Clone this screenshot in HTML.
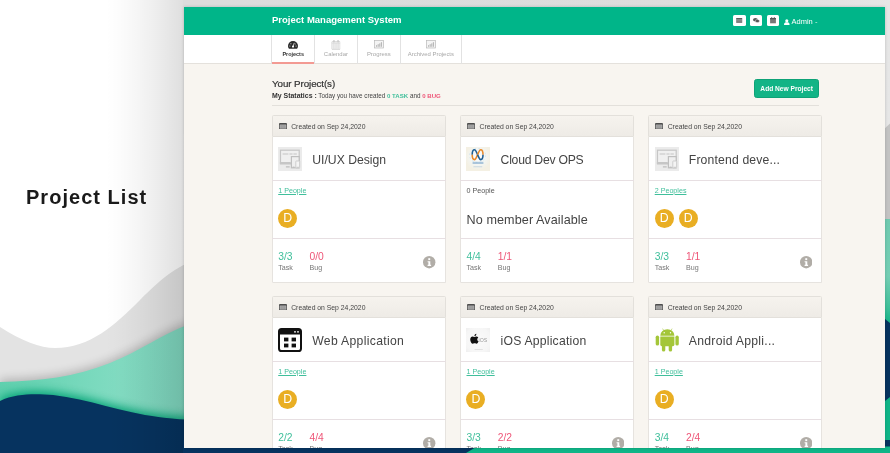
<!DOCTYPE html>
<html>
<head>
<meta charset="utf-8">
<title>Project List</title>
<style>
*{box-sizing:border-box;margin:0;padding:0}
html,body{width:890px;height:453px;overflow:hidden;background:#fff}
body{font-family:"Liberation Sans",sans-serif;position:relative;color:#444}
#title,#frame{will-change:transform}
.abs{position:absolute}
#bg{position:absolute;left:0;top:0;width:890px;height:453px}
#title{position:absolute;left:26.3px;top:184.7px;font-size:20px;font-weight:bold;color:#1a1a1a;white-space:nowrap;line-height:24px;letter-spacing:1.03px}
#frame{position:absolute;left:184px;top:7px;width:701.2px;height:440.8px;background:#f8f5f0;overflow:hidden;box-shadow:0 0 3px rgba(0,0,0,.18)}
#hdr{position:absolute;left:0;top:0;width:100%;height:28px;background:#00b589}
#hdr .ttl{position:absolute;left:88px;top:7.2px;font-size:9.52px;font-weight:bold;color:#fff;white-space:nowrap;line-height:12px}
.hb svg{display:block}
.hb{position:absolute;top:8.3px;width:12.4px;height:10.8px;background:#fff;border-radius:1.6px}
#nav{position:absolute;left:0;top:28px;width:100%;height:28.6px;background:#fff;border-bottom:0.7px solid #e4e1dc}
.tab{position:absolute;top:0;height:28.6px;border-left:0.6px solid #e2e2e2;text-align:center}
.tab .lb{position:absolute;left:0;right:0;top:16.3px;font-size:5.95px;line-height:7px;color:#a8a8a8;white-space:nowrap}
.tab.act .lb{color:#333;font-weight:bold;font-size:5.48px}
.tab svg{position:absolute;left:50%;top:5.2px;transform:translateX(-50%)}
.card{position:absolute;width:174px;height:168px}
.ch{position:absolute;left:0;top:0;width:100%;height:21.7px;background:linear-gradient(#f6f3ee,#eeebe6);border:0.7px solid #e3e0db;border-radius:1.5px 1.5px 0 0}
.ch span{position:absolute;left:18.3px;top:6.6px;font-size:6.82px;line-height:8px;color:#444;white-space:nowrap}
.ch svg{position:absolute;left:5.9px;top:6.3px}
.cb{position:absolute;left:0;top:21.7px;width:100%;height:146.3px;background:#fff;border:0.7px solid #e6e3df;border-top:none;border-radius:0 0 1.5px 1.5px}
.ln{position:absolute;left:0;width:100%;height:0.7px;background:#e7dfe2}
.ico{position:absolute;left:6.3px;top:31.6px;width:24px;height:24px}
.nm{position:absolute;left:40.4px;top:36.9px;font-size:12.2px;line-height:16px;color:#444;white-space:nowrap}
.pp{position:absolute;left:6.3px;top:71.5px;font-size:7.15px;line-height:8px;color:#3fbf9b;text-decoration:underline;white-space:nowrap}
.pp.no{color:#555;text-decoration:none}
.av{position:absolute;top:93.6px;width:19px;height:19px;border-radius:50%;background:#e9ae23;color:#fff;font-size:12.3px;line-height:19.4px;text-align:center}
.nomem{position:absolute;left:6.3px;top:97.5px;font-size:12.6px;letter-spacing:.1px;line-height:15px;color:#444;white-space:nowrap}
.s1{position:absolute;top:135.4px;font-size:10.3px;line-height:11px;white-space:nowrap}
.s2{position:absolute;top:148.5px;font-size:7.15px;line-height:8px;color:#777;white-space:nowrap}
.g{color:#3fbf9b}.r{color:#ee5577}
.inf{position:absolute;left:151.5px;top:141.1px;width:12.4px;height:12.4px}
</style>
</head>
<body>
<svg id="bg" viewBox="0 0 890 453">
  <defs>
    <linearGradient id="gbg" x1="0" y1="0" x2="890" y2="0" gradientUnits="userSpaceOnUse">
      <stop offset="0" stop-color="#ffffff"/>
      <stop offset="0.118" stop-color="#ffffff"/>
      <stop offset="0.207" stop-color="#dcdcdc"/>
      <stop offset="1" stop-color="#dcdcdc"/>
    </linearGradient>
    <linearGradient id="gsh" x1="0" y1="0" x2="890" y2="0" gradientUnits="userSpaceOnUse"><stop offset="0.0000" stop-color="#000" stop-opacity="0"/><stop offset="0.1180" stop-color="#000" stop-opacity="0.0"/><stop offset="0.1292" stop-color="#000" stop-opacity="0.0072"/><stop offset="0.1404" stop-color="#000" stop-opacity="0.019"/><stop offset="0.1573" stop-color="#000" stop-opacity="0.0416"/><stop offset="0.1708" stop-color="#000" stop-opacity="0.0628"/><stop offset="0.1820" stop-color="#000" stop-opacity="0.0823"/><stop offset="0.1910" stop-color="#000" stop-opacity="0.0989"/><stop offset="0.1989" stop-color="#000" stop-opacity="0.1142"/><stop offset="0.2067" stop-color="#000" stop-opacity="0.13"/><stop offset="1.0000" stop-color="#000" stop-opacity="0.13"/></linearGradient>
    <linearGradient id="gteal" x1="0" y1="0" x2="200" y2="0" gradientUnits="userSpaceOnUse">
      <stop offset="0" stop-color="#5fd0ae"/>
      <stop offset="0.6" stop-color="#82dcc2"/>
      <stop offset="1" stop-color="#7fd6bf"/>
    </linearGradient>
    <linearGradient id="gstrip" x1="0" y1="219" x2="0" y2="323" gradientUnits="userSpaceOnUse"><stop offset="0" stop-color="#6fcab0"/><stop offset=".55" stop-color="#74ceb4"/><stop offset=".85" stop-color="#3fc09a"/><stop offset="1" stop-color="#14b588"/></linearGradient>
    <linearGradient id="gtop" x1="183" y1="0" x2="890" y2="0" gradientUnits="userSpaceOnUse"><stop offset="0" stop-color="#dcdcdc"/><stop offset=".8" stop-color="#dddddd"/><stop offset="1" stop-color="#e6e6e6"/></linearGradient>
    <filter id="b4" x="-20%" y="-20%" width="140%" height="140%"><feGaussianBlur stdDeviation="5"/></filter>
    <filter id="b3" x="-20%" y="-20%" width="140%" height="140%"><feGaussianBlur stdDeviation="5"/></filter>
    <clipPath id="cgray"><path d="M0,327 C22,341 40,348 55,348 C90,348 115,325 140,300 C160,280 172,270 190,262 L190,453 L0,453 Z"/></clipPath>
    <clipPath id="cteal"><path d="M0,382 C40,381 75,377 110,363 C140,351 160,335 190,324 L190,453 L0,453 Z"/></clipPath>
  </defs>
  <rect x="0" y="0" width="890" height="453" fill="#ffffff"/>
  <!-- gray band -->
  <path d="M0,327 C22,341 40,348 55,348 C90,348 115,325 140,300 C160,280 172,270 190,262 L190,453 L0,453 Z" fill="#e3e3e3"/>
  <!-- shadow of teal on gray -->
  <g clip-path="url(#cgray)">
    <path d="M0,382 C40,381 75,377 110,363 C140,351 160,335 190,324 L190,453 L0,453 Z" transform="translate(0,-3)" fill="#000" opacity="0.2" filter="url(#b4)"/>
  </g>
  <!-- teal band -->
  <path d="M0,382 C40,381 75,377 110,363 C140,351 160,335 190,324 L190,453 L0,453 Z" fill="url(#gteal)"/>
  <g clip-path="url(#cteal)">
    <path d="M0,401 C13,394.5 28,394 40,394.3 C75,395 110,409 145,415 C165,418 175,419 190,420 L190,453 L0,453 Z" transform="translate(0,-3)" fill="#00a274" opacity="0.95" filter="url(#b3)"/>
  </g>
  <!-- navy -->
  <path d="M0,401 C13,394.5 28,394 40,394.3 C75,395 110,409 145,415 C165,418 175,419 190,420 L190,453 L0,453 Z" fill="#06335f"/>
  <!-- right/top base -->
  <rect x="183" y="0" width="707" height="130" fill="#dcdcdc"/>
  <rect x="0" y="0" width="890" height="453" fill="url(#gsh)"/>
  <rect x="183" y="0" width="707" height="134" fill="url(#gtop)"/>
  <!-- right strip -->
  <path d="M880,133 L890,123.5 L890,240 L880,240 Z" fill="#c3c3c3"/>
  <rect x="880" y="219" width="10" height="106" fill="url(#gstrip)"/>
  <path d="M880,315 L890,323 L890,405 L880,405 Z" fill="#06335f"/>
  <path d="M880,405 L890,397 L890,453 L880,453 Z" fill="#10b588"/>
  <!-- bottom strip -->
  <rect x="183" y="440" width="707" height="13" fill="#06335f"/>
  <path d="M477,446.5 L890,446.5 L890,453 L466,453 Z" fill="#10b588"/>
</svg>

<div id="title">Project List</div>

<div id="frame">
  <div id="hdr">
    <div class="ttl">Project Management System</div>
    <div class="hb" style="left:549.2px"><svg width="12.4" height="10.8" viewBox="0 0 12.4 10.8"><rect x="3.2" y="3" width="6" height="4.8" fill="#555"/><path d="M3.2,4.4h6M3.2,5.6h6M3.2,6.8h6" stroke="#fff" stroke-width=".35"/></svg></div>
    <div class="hb" style="left:566px"><svg width="12.4" height="10.8" viewBox="0 0 12.4 10.8"><ellipse cx="5.4" cy="4.8" rx="2.4" ry="1.8" fill="#555"/><ellipse cx="7.4" cy="6" rx="2.2" ry="1.6" fill="#555" stroke="#fff" stroke-width=".4"/></svg></div>
    <div class="hb" style="left:583.1px;width:12px"><svg width="12" height="10.8" viewBox="0 0 12 10.8"><rect x="3.1" y="3" width="5.8" height="5.3" fill="#777"/><rect x="3.1" y="3" width="5.8" height="1.3" fill="#555"/><rect x="4.2" y="2.2" width="1" height="1.6" fill="#555"/><rect x="6.8" y="2.2" width="1" height="1.6" fill="#555"/></svg></div>
    <svg class="abs" style="left:600.2px;top:11.6px" width="5.6" height="6" viewBox="0 0 5.6 6"><circle cx="2.8" cy="1.7" r="1.55" fill="#fff"/><path d="M0,6 C0,3.6 1.2,3.2 2.8,3.2 C4.4,3.2 5.6,3.6 5.6,6 Z" fill="#fff"/></svg>
    <div class="abs" style="left:607.6px;top:10.4px;font-size:7.47px;line-height:9px;color:#fff;white-space:nowrap">Admin</div>
    <svg class="abs" style="left:631px;top:14.6px" width="2.6" height="1.6" viewBox="0 0 2.6 1.6"><path d="M0,0 L2.6,0 L1.3,1.6 Z" fill="#8fe0c8"/></svg>
  </div>
  <div id="nav">
    <div class="tab act" style="left:87.4px;width:42.6px">
      <svg width="10" height="7.8" viewBox="0 0 10 7.8" style="top:5.9px"><defs><clipPath id="tc"><rect x="0" y="0" width="10" height="7.7"/></clipPath></defs><circle cx="5" cy="5" r="5" fill="#2b2b2b" clip-path="url(#tc)"/><circle cx="5" cy="5.6" r="1.05" fill="#fff"/><path d="M5,5.6 L6.3,1.9" stroke="#fff" stroke-width=".75"/><circle cx="1.9" cy="5" r=".55" fill="#fff"/><circle cx="2.9" cy="2.7" r=".55" fill="#fff"/><circle cx="8.1" cy="5" r=".55" fill="#fff"/><circle cx="7.6" cy="3" r=".4" fill="#fff"/></svg>
      <div class="lb">Projects</div>
      <div class="abs" style="left:0;width:42.6px;top:27px;height:2.3px;background:#f39a93"></div>
    </div>
    <div class="tab" style="left:130px;width:42.8px">
      <svg width="9.4" height="9.8" viewBox="0 0 9.4 9.8" style="top:4.9px"><rect x=".4" y="1.6" width="8.6" height="7.8" rx=".6" fill="#f1f1f1" stroke="#c4c4c4" stroke-width=".6"/><path d="M2.6,2.4v6.6M4.7,2.4v6.6M6.8,2.4v6.6" stroke="#d0d0d0" stroke-width=".55"/><path d="M.4,3.4h8.6" stroke="#d6d6d6" stroke-width=".5"/><rect x="2.1" y="0" width="1.1" height="2.4" rx=".4" fill="#c2c2c2"/><rect x="6.2" y="0" width="1.1" height="2.4" rx=".4" fill="#c2c2c2"/></svg>
      <div class="lb">Calendar</div>
    </div>
    <div class="tab" style="left:172.8px;width:43px">
      <svg width="10" height="8.4" viewBox="0 0 10 8.4"><rect x=".4" y=".4" width="9.2" height="7.6" fill="#f4f4f4" stroke="#b9b9b9" stroke-width=".7"/><path d="M2.6,6.8v-1.6M4.2,6.8v-2.6M5.8,6.8v-3.4M7.4,6.8v-4.6" stroke="#a9a9a9" stroke-width=".9"/></svg>
      <div class="lb">Progress</div>
    </div>
    <div class="tab" style="left:215.8px;width:62.2px;border-right:0.6px solid #e2e2e2">
      <svg width="10" height="8.4" viewBox="0 0 10 8.4"><rect x=".4" y=".4" width="9.2" height="7.6" fill="#f4f4f4" stroke="#b9b9b9" stroke-width=".7"/><path d="M2.6,6.8v-1.6M4.2,6.8v-2.6M5.8,6.8v-3.4M7.4,6.8v-4.6" stroke="#a9a9a9" stroke-width=".9"/></svg>
      <div class="lb">Archived Projects</div>
    </div>
  </div>

  <div class="abs" style="left:88px;top:71.2px;font-size:9.8px;letter-spacing:-.09px;line-height:12px;color:#333;-webkit-text-stroke:.2px #333;white-space:nowrap">Your Project(s)</div>
  <div class="abs" style="left:88px;top:85.2px;font-size:6.3px;line-height:8px;color:#444;white-space:nowrap"><b style="font-size:6.95px;color:#333">My Statatics :</b> Today you have created <b class="g" style="font-size:6.1px">0 TASK</b> and <b class="r" style="font-size:6.1px">0 BUG</b></div>
  <div class="abs" style="left:570.1px;top:72.4px;width:65.2px;height:18.5px;background:#12b486;border:0.6px solid #0ea277;border-radius:2.6px;color:#fff;font-weight:bold;font-size:6.64px;line-height:17.4px;text-align:center;white-space:nowrap">Add New Project</div>
  <div class="abs" style="left:88px;top:98px;width:547.4px;height:0.7px;background:#e3e0db"></div>

  <!-- CARDS -->
  <!-- row 1 -->
  <div class="card" style="left:87.9px;top:108.3px">
    <div class="ch"><svg width="8" height="6.2" viewBox="0 0 8 6.2"><rect width="8" height="6.2" rx=".5" fill="#4d4d4d"/><rect x=".7" y="1.6" width="6.6" height="4" fill="#b9b9b9"/><path d="M.7,2.9h6.6M.7,4.2h6.6" stroke="#7d7d7d" stroke-width=".5"/><path d="M2.9,1.6v4M5.1,1.6v4" stroke="#8a8a8a" stroke-width=".5"/></svg><span>Created on Sep 24,2020</span></div>
    <div class="cb"></div>
    <svg class="ico" viewBox="0 0 24 24"><rect width="24" height="24" fill="#ebebeb"/><rect x="2.5" y="3.2" width="18.7" height="13.5" fill="#f0f0f0" stroke="#c6c6c6" stroke-width="1.2"/><rect x="1.9" y="15" width="10.9" height="2.3" fill="#c6c6c6"/><path d="M4.6,6.9h5.8M11.4,6.9h3.2M15.4,6.9h3.4" stroke="#d2d2d2" stroke-width="1.5"/><rect x="7.9" y="19.1" width="3.8" height="1.5" fill="#c6c6c6"/><rect x="13.4" y="9.6" width="7.8" height="11.2" fill="#efefef" stroke="#bfbfbf" stroke-width="1.2"/><rect x="14.6" y="19.6" width="2" height="1.2" fill="#bfbfbf"/><rect x="17.8" y="14" width="3.9" height="6.9" rx=".5" fill="#f4f4f4" stroke="#cacaca" stroke-width=".9"/><rect x="18.6" y="19.8" width="2.4" height=".9" fill="#c6c6c6"/></svg>
    <div class="nm">UI/UX Design</div>
    <div class="ln" style="top:64.4px"></div>
    <div class="pp">1 People</div>
    <div class="av" style="left:6.3px">D</div>
    <div class="ln" style="top:122.4px"></div>
    <div class="s1 g" style="left:6.3px">3/3</div><div class="s1 r" style="left:37.6px">0/0</div>
    <div class="s2" style="left:6.3px">Task</div><div class="s2" style="left:37.6px">Bug</div>
    <svg class="inf" viewBox="0 0 12.4 12.4"><circle cx="6.2" cy="6.2" r="6.2" fill="#b1ada7"/><rect x="5.3" y="2.2" width="1.9" height="1.9" fill="#fff"/><path d="M4.6,5.2h2.7v3.6h.8v1.1H4.6v-1.1h.8V6.3h-.8z" fill="#fff"/></svg>
  </div>

  <div class="card" style="left:276.2px;top:108.3px">
    <div class="ch"><svg width="8" height="6.2" viewBox="0 0 8 6.2"><rect width="8" height="6.2" rx=".5" fill="#4d4d4d"/><rect x=".7" y="1.6" width="6.6" height="4" fill="#b9b9b9"/><path d="M.7,2.9h6.6M.7,4.2h6.6" stroke="#7d7d7d" stroke-width=".5"/><path d="M2.9,1.6v4M5.1,1.6v4" stroke="#8a8a8a" stroke-width=".5"/></svg><span>Created on Sep 24,2020</span></div>
    <div class="cb"></div>
    <svg class="ico" viewBox="0 0 24 24"><defs><radialGradient id="cg" cx=".5" cy=".42" r=".55"><stop offset="0" stop-color="#fdfeff"/><stop offset=".55" stop-color="#f3f6f4"/><stop offset="1" stop-color="#f4f0e3"/></radialGradient></defs><rect width="24" height="24" fill="url(#cg)"/><ellipse cx="11.6" cy="8.4" rx="8" ry="7" fill="none" stroke="#b9d9ee" stroke-width=".7" stroke-dasharray="1.6 2.4" opacity=".8"/><path d="M11.6,7.7 C10.5,5.2 9.7,2.8 8.5,2.8 C7.1,2.8 6.2,5 6.2,7.7" fill="none" stroke="#1f5f93" stroke-width="1.6"/><path d="M6.2,7.7 C6.2,10.4 7.1,12.6 8.5,12.6 C9.7,12.6 10.5,10.2 11.6,7.7" fill="none" stroke="#e98a2b" stroke-width="1.6"/><path d="M11.6,7.7 C12.7,5.2 13.5,2.8 14.7,2.8 C16.1,2.8 17,5 17,7.7" fill="none" stroke="#e98a2b" stroke-width="1.6"/><path d="M17,7.7 C17,10.4 16.1,12.6 14.7,12.6 C13.5,12.6 12.7,10.2 11.6,7.7" fill="none" stroke="#1f5f93" stroke-width="1.6"/><rect x="6.6" y="14.8" width="10.8" height="2.2" fill="#6f9cc4" opacity=".55"/><rect x="7.4" y="19.4" width="8.8" height=".8" fill="#8fb2d0" opacity=".5"/></svg>
    <div class="nm" style="letter-spacing:-.24px">Cloud Dev OPS</div>
    <div class="ln" style="top:64.4px"></div>
    <div class="pp no">0 People</div>
    <div class="nomem">No member Available</div>
    <div class="ln" style="top:122.4px"></div>
    <div class="s1 g" style="left:6.3px">4/4</div><div class="s1 r" style="left:37.6px">1/1</div>
    <div class="s2" style="left:6.3px">Task</div><div class="s2" style="left:37.6px">Bug</div>
  </div>

  <div class="card" style="left:464.4px;top:108.3px">
    <div class="ch"><svg width="8" height="6.2" viewBox="0 0 8 6.2"><rect width="8" height="6.2" rx=".5" fill="#4d4d4d"/><rect x=".7" y="1.6" width="6.6" height="4" fill="#b9b9b9"/><path d="M.7,2.9h6.6M.7,4.2h6.6" stroke="#7d7d7d" stroke-width=".5"/><path d="M2.9,1.6v4M5.1,1.6v4" stroke="#8a8a8a" stroke-width=".5"/></svg><span>Created on Sep 24,2020</span></div>
    <div class="cb"></div>
    <svg class="ico" viewBox="0 0 24 24"><rect width="24" height="24" fill="#ebebeb"/><rect x="2.5" y="3.2" width="18.7" height="13.5" fill="#f0f0f0" stroke="#c6c6c6" stroke-width="1.2"/><rect x="1.9" y="15" width="10.9" height="2.3" fill="#c6c6c6"/><path d="M4.6,6.9h5.8M11.4,6.9h3.2M15.4,6.9h3.4" stroke="#d2d2d2" stroke-width="1.5"/><rect x="7.9" y="19.1" width="3.8" height="1.5" fill="#c6c6c6"/><rect x="13.4" y="9.6" width="7.8" height="11.2" fill="#efefef" stroke="#bfbfbf" stroke-width="1.2"/><rect x="14.6" y="19.6" width="2" height="1.2" fill="#bfbfbf"/><rect x="17.8" y="14" width="3.9" height="6.9" rx=".5" fill="#f4f4f4" stroke="#cacaca" stroke-width=".9"/><rect x="18.6" y="19.8" width="2.4" height=".9" fill="#c6c6c6"/></svg>
    <div class="nm" style="letter-spacing:.16px">Frontend deve...</div>
    <div class="ln" style="top:64.4px"></div>
    <div class="pp">2 Peoples</div>
    <div class="av" style="left:6.3px">D</div><div class="av" style="left:30.4px">D</div>
    <div class="ln" style="top:122.4px"></div>
    <div class="s1 g" style="left:6.3px">3/3</div><div class="s1 r" style="left:37.6px">1/1</div>
    <div class="s2" style="left:6.3px">Task</div><div class="s2" style="left:37.6px">Bug</div>
    <svg class="inf" viewBox="0 0 12.4 12.4"><circle cx="6.2" cy="6.2" r="6.2" fill="#b1ada7"/><rect x="5.3" y="2.2" width="1.9" height="1.9" fill="#fff"/><path d="M4.6,5.2h2.7v3.6h.8v1.1H4.6v-1.1h.8V6.3h-.8z" fill="#fff"/></svg>
  </div>

  <!-- row 2 -->
  <div class="card" style="left:87.9px;top:289.3px">
    <div class="ch"><svg width="8" height="6.2" viewBox="0 0 8 6.2"><rect width="8" height="6.2" rx=".5" fill="#4d4d4d"/><rect x=".7" y="1.6" width="6.6" height="4" fill="#b9b9b9"/><path d="M.7,2.9h6.6M.7,4.2h6.6" stroke="#7d7d7d" stroke-width=".5"/><path d="M2.9,1.6v4M5.1,1.6v4" stroke="#8a8a8a" stroke-width=".5"/></svg><span>Created on Sep 24,2020</span></div>
    <div class="cb"></div>
    <svg class="ico" viewBox="0 0 24 24"><rect x="1" y="1" width="22" height="22" rx="2.6" fill="#fff" stroke="#111" stroke-width="2"/><path d="M1,3.6 A2.6,2.6 0 0 1 3.6,1 H20.4 A2.6,2.6 0 0 1 23,3.6 V6.6 H1 Z" fill="#111"/><circle cx="17" cy="3.8" r=".9" fill="#fff"/><circle cx="20" cy="3.8" r=".9" fill="#fff"/><rect x="6" y="9.6" width="4.4" height="3.8" fill="#111"/><rect x="13.6" y="9.6" width="4.4" height="3.8" fill="#111"/><rect x="6" y="15.6" width="4.4" height="3.8" fill="#111"/><rect x="13.6" y="15.6" width="4.4" height="3.8" fill="#111"/></svg>
    <div class="nm" style="letter-spacing:.31px">Web Application</div>
    <div class="ln" style="top:64.4px"></div>
    <div class="pp">1 People</div>
    <div class="av" style="left:6.3px">D</div>
    <div class="ln" style="top:122.4px"></div>
    <div class="s1 g" style="left:6.3px">2/2</div><div class="s1 r" style="left:37.6px">4/4</div>
    <div class="s2" style="left:6.3px">Task</div><div class="s2" style="left:37.6px">Bug</div>
    <svg class="inf" viewBox="0 0 12.4 12.4"><circle cx="6.2" cy="6.2" r="6.2" fill="#b1ada7"/><rect x="5.3" y="2.2" width="1.9" height="1.9" fill="#fff"/><path d="M4.6,5.2h2.7v3.6h.8v1.1H4.6v-1.1h.8V6.3h-.8z" fill="#fff"/></svg>
  </div>

  <div class="card" style="left:276.2px;top:289.3px">
    <div class="ch"><svg width="8" height="6.2" viewBox="0 0 8 6.2"><rect width="8" height="6.2" rx=".5" fill="#4d4d4d"/><rect x=".7" y="1.6" width="6.6" height="4" fill="#b9b9b9"/><path d="M.7,2.9h6.6M.7,4.2h6.6" stroke="#7d7d7d" stroke-width=".5"/><path d="M2.9,1.6v4M5.1,1.6v4" stroke="#8a8a8a" stroke-width=".5"/></svg><span>Created on Sep 24,2020</span></div>
    <div class="cb"></div>
    <svg class="ico" viewBox="0 0 24 24"><defs><radialGradient id="ag" cx=".5" cy=".5" r=".75"><stop offset="0" stop-color="#fbfbfb"/><stop offset=".7" stop-color="#f6f6f6"/><stop offset="1" stop-color="#ededed"/></radialGradient></defs><rect width="24" height="24" fill="url(#ag)"/><g transform="translate(-2.3,-1.2) scale(1.02)"><path d="M8.6,9.4 C9.4,9.4 9.9,9.9 10.5,9.9 C11.1,9.9 11.6,9.4 12.5,9.4 C13.2,9.4 13.9,9.8 14.3,10.4 C12.8,11.3 13,13.6 14.6,14.2 C14.2,15.3 13.4,16.6 12.5,16.6 C11.8,16.6 11.6,16.2 10.7,16.2 C9.8,16.2 9.5,16.6 8.9,16.6 C7.8,16.6 6.4,14.4 6.4,12.4 C6.4,10.5 7.6,9.4 8.6,9.4 Z" fill="#111"/><path d="M10.5,9.2 C10.4,8 11.3,7 12.4,6.9 C12.5,8.1 11.6,9.2 10.5,9.2 Z" fill="#111"/></g><text x="12.6" y="14.4" font-family="Liberation Sans, sans-serif" font-size="5.2" fill="#9a9a9a">iOS</text><rect x="8.6" y="21" width="8.2" height=".6" fill="#d4d4d4"/></svg>
    <div class="nm" style="letter-spacing:.21px">iOS Application</div>
    <div class="ln" style="top:64.4px"></div>
    <div class="pp">1 People</div>
    <div class="av" style="left:6.3px">D</div>
    <div class="ln" style="top:122.4px"></div>
    <div class="s1 g" style="left:6.3px">3/3</div><div class="s1 r" style="left:37.6px">2/2</div>
    <div class="s2" style="left:6.3px">Task</div><div class="s2" style="left:37.6px">Bug</div>
    <svg class="inf" viewBox="0 0 12.4 12.4"><circle cx="6.2" cy="6.2" r="6.2" fill="#b1ada7"/><rect x="5.3" y="2.2" width="1.9" height="1.9" fill="#fff"/><path d="M4.6,5.2h2.7v3.6h.8v1.1H4.6v-1.1h.8V6.3h-.8z" fill="#fff"/></svg>
  </div>

  <div class="card" style="left:464.4px;top:289.3px">
    <div class="ch"><svg width="8" height="6.2" viewBox="0 0 8 6.2"><rect width="8" height="6.2" rx=".5" fill="#4d4d4d"/><rect x=".7" y="1.6" width="6.6" height="4" fill="#b9b9b9"/><path d="M.7,2.9h6.6M.7,4.2h6.6" stroke="#7d7d7d" stroke-width=".5"/><path d="M2.9,1.6v4M5.1,1.6v4" stroke="#8a8a8a" stroke-width=".5"/></svg><span>Created on Sep 24,2020</span></div>
    <div class="cb"></div>
    <svg class="ico" viewBox="0 0 24 24"><g fill="#a4c639"><path d="M5.3,7.7 A7.05,6.5 0 0 1 19.4,7.7 Z"/><path d="M5.3,8.6 H19.4 V16.6 A1.6,1.6 0 0 1 17.8,18.2 H6.9 A1.6,1.6 0 0 1 5.3,16.6 Z"/><rect x=".7" y="7.6" width="3.4" height="10" rx="1.7"/><rect x="20.4" y="7.6" width="3.4" height="10" rx="1.7"/><rect x="6.9" y="16" width="3.4" height="7.6" rx="1.7"/><rect x="13.7" y="16" width="3.4" height="7.6" rx="1.7"/><path d="M7.6,.6 L9,3 M17.1,.6 L15.7,3" stroke="#a4c639" stroke-width=".6"/></g><circle cx="9.2" cy="4.7" r=".7" fill="#fff"/><circle cx="15.5" cy="4.7" r=".7" fill="#fff"/></svg>
    <div class="nm" style="letter-spacing:.28px">Android Appli...</div>
    <div class="ln" style="top:64.4px"></div>
    <div class="pp">1 People</div>
    <div class="av" style="left:6.3px">D</div>
    <div class="ln" style="top:122.4px"></div>
    <div class="s1 g" style="left:6.3px">3/4</div><div class="s1 r" style="left:37.6px">2/4</div>
    <div class="s2" style="left:6.3px">Task</div><div class="s2" style="left:37.6px">Bug</div>
    <svg class="inf" viewBox="0 0 12.4 12.4"><circle cx="6.2" cy="6.2" r="6.2" fill="#b1ada7"/><rect x="5.3" y="2.2" width="1.9" height="1.9" fill="#fff"/><path d="M4.6,5.2h2.7v3.6h.8v1.1H4.6v-1.1h.8V6.3h-.8z" fill="#fff"/></svg>
  </div>
</div>
</body>
</html>
